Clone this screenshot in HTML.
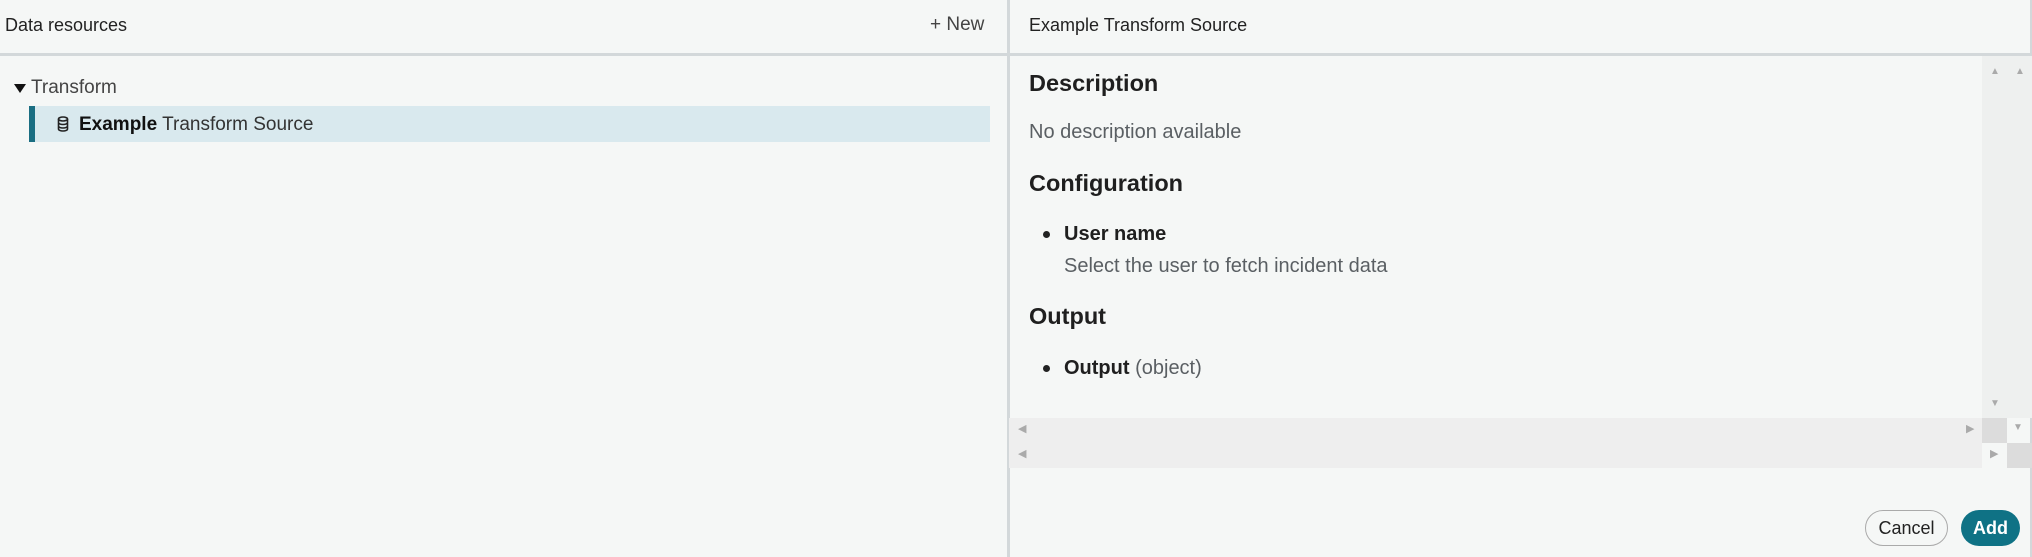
<!DOCTYPE html>
<html><head><meta charset="utf-8"><style>
*{margin:0;padding:0;box-sizing:border-box}
body{width:2032px;height:557px;background:#f5f7f6;font-family:"Liberation Sans",sans-serif;color:#222;position:relative;overflow:hidden}
.a{position:absolute;white-space:nowrap}
.h{font-size:23.5px;font-weight:bold;color:#1f1f1f}
.t{font-size:20px;color:#5a5f63}
</style></head><body>
<div class="a" style="left:0;top:53px;width:2032px;height:3px;background:#d3d8da"></div>
<div class="a" style="left:1007px;top:0;width:3px;height:557px;background:#d3d8da"></div>
<div class="a" style="left:2030px;top:0;width:2px;height:557px;background:#d3d8da"></div>
<div class="a" style="left:5px;top:15px;font-size:18px;color:#222">Data resources</div>
<div class="a" style="left:930px;top:14px;font-size:19px;color:#444">+ New</div>
<div class="a" style="left:14px;top:84px;width:0;height:0;border-left:6px solid transparent;border-right:6px solid transparent;border-top:9px solid #111"></div>
<div class="a" style="left:31px;top:77px;font-size:19px;color:#444">Transform</div>
<div class="a" style="left:29px;top:106px;width:961px;height:36px;background:#d9e9ee;border-left:6px solid #1a6e82"></div>
<svg class="a" style="left:57px;top:116px" width="12" height="16" viewBox="0 0 12 16"><g fill="none" stroke="#222" stroke-width="1.6"><ellipse cx="6" cy="3" rx="4.5" ry="2"/><path d="M1.5 3v10c0 1.2 2 2 4.5 2s4.5-.8 4.5-2V3M1.5 6.5c0 1.2 2 2 4.5 2s4.5-.8 4.5-2M1.5 10c0 1.2 2 2 4.5 2s4.5-.8 4.5-2"/></g></svg>
<div class="a" style="left:79px;top:114px;font-size:19px;color:#333"><b style="color:#111">Example</b> Transform Source</div>
<div class="a" style="left:1029px;top:15px;font-size:18px;color:#222">Example Transform Source</div>
<div class="a" style="left:1982px;top:56px;width:50px;height:362px;background:#eef0ef"></div>
<div class="a" style="left:1990px;top:66px;font-size:10px;color:#aaa">▲</div>
<div class="a" style="left:2015px;top:66px;font-size:10px;color:#aaa">▲</div>
<div class="a" style="left:1990px;top:398px;font-size:10px;color:#aaa">▼</div>
<div class="a" style="left:1009px;top:418px;width:973px;height:50px;background:#eeeeee"></div>
<div class="a" style="left:1982px;top:418px;width:25px;height:25px;background:#dcdcdc"></div>
<div class="a" style="left:2007px;top:443px;width:25px;height:25px;background:#dcdcdc"></div>
<div class="a" style="left:2013px;top:422px;font-size:10px;color:#aaa">▼</div>
<div class="a" style="left:1018px;top:422px;font-size:11px;color:#aaa">◀</div>
<div class="a" style="left:1966px;top:422px;font-size:11px;color:#aaa">▶</div>
<div class="a" style="left:1018px;top:447px;font-size:11px;color:#aaa">◀</div>
<div class="a" style="left:1990px;top:447px;font-size:11px;color:#aaa">▶</div>
<div class="a h" style="left:1029px;top:70px">Description</div>
<div class="a t" style="left:1029px;top:121px">No description available</div>
<div class="a h" style="left:1029px;top:170px">Configuration</div>
<div class="a" style="left:1043px;top:231px;width:7px;height:7px;border-radius:50%;background:#222"></div>
<div class="a" style="left:1064px;top:223px;font-size:20px;font-weight:bold;color:#1f1f1f">User name</div>
<div class="a t" style="left:1064px;top:255px">Select the user to fetch incident data</div>
<div class="a h" style="left:1029px;top:303px">Output</div>
<div class="a" style="left:1043px;top:365px;width:7px;height:7px;border-radius:50%;background:#222"></div>
<div class="a" style="left:1064px;top:357px;font-size:20px;color:#5a5f63"><b style="color:#1f1f1f">Output</b> (object)</div>
<div class="a" style="left:1865px;top:510px;width:83px;height:36px;border:1px solid #aaa;border-radius:18px;font-size:18px;color:#222;text-align:center;line-height:34px">Cancel</div>
<div class="a" style="left:1961px;top:510px;width:59px;height:36px;background:#0f7285;border-radius:18px;font-size:18px;font-weight:bold;color:#fff;text-align:center;line-height:36px">Add</div>
</body></html>
